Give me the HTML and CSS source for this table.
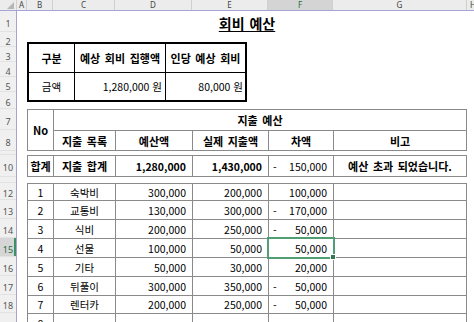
FILE: index.html
```html
<!DOCTYPE html>
<html lang="ko">
<head>
<meta charset="utf-8">
<link rel="stylesheet" href="styles.css">
</head>
<body>
<div class="sheet">
  <div class="colheads">
    <div class="corner"><span class="tri"></span></div>
    <div class="ch w-a">A</div>
    <div class="ch w-b">B</div>
    <div class="ch w-c">C</div>
    <div class="ch w-d">D</div>
    <div class="ch w-e">E</div>
    <div class="ch w-f sel">F</div>
    <div class="ch w-g">G</div>
    <div class="ch w-h">H</div>
  </div>
  <div class="body">
    <div class="rowheads">
      <div class="rh h21">1</div>
      <div class="rh h15">2</div>
      <div class="rh h15">3</div>
      <div class="rh h15">4</div>
      <div class="rh h15">5</div>
      <div class="rh h17">6</div>
      <div class="rh h21">7</div>
      <div class="rh h21">8</div>
      <div class="rh h4"></div>
      <div class="rh h22">10</div>
      <div class="rh h6"></div>
      <div class="rh h17">12</div>
      <div class="rh h19">13</div>
      <div class="rh h19">14</div>
      <div class="rh h19 sel">15</div>
      <div class="rh h19">16</div>
      <div class="rh h19">17</div>
      <div class="rh h18">18</div>
      <div class="rh h19"></div>
    </div>
    <div class="content">
      <div class="title"><span>회비 예산</span></div>
      <div class="summary-wrap">
        <div class="summary">
          <div class="sc c b">구분</div>
          <div class="sc c b">예상 회비 집행액</div>
          <div class="sc c b">인당 예상 회비</div>
          <div class="sc c">금액</div>
          <div class="sc r r3">1,280,000 원</div>
          <div class="sc r r1">80,000 원</div>
        </div>
      </div>
      <div class="tbl head">
        <div class="c b span-r2">No</div>
        <div class="c b span-c5">지출 예산</div>
        <div class="c b">지출 목록</div>
        <div class="c b">예산액</div>
        <div class="c b">실제 지출액</div>
        <div class="c b">차액</div>
        <div class="c b">비고</div>
      </div>
      <div class="tbl total">
        <div class="c b">합계</div>
        <div class="c b">지출 합계</div>
        <div class="r bn">1,280,000</div>
        <div class="r bn">1,430,000</div>
        <div class="acct"><span>-</span><span>150,000</span></div>
        <div class="c b">예산 초과 되었습니다.</div>
      </div>
      <div class="tbl data">
        <div class="c">1</div><div class="c">숙박비</div><div class="r">300,000</div><div class="r">200,000</div><div class="acct"><span></span><span>100,000</span></div><div></div>
        <div class="c">2</div><div class="c">교통비</div><div class="r">130,000</div><div class="r">300,000</div><div class="acct"><span>-</span><span>170,000</span></div><div></div>
        <div class="c">3</div><div class="c">식비</div><div class="r">200,000</div><div class="r">250,000</div><div class="acct"><span>-</span><span>50,000</span></div><div></div>
        <div class="c">4</div><div class="c">선물</div><div class="r">100,000</div><div class="r">50,000</div><div class="acct active"><span></span><span>50,000</span></div><div></div>
        <div class="c">5</div><div class="c">기타</div><div class="r">50,000</div><div class="r">30,000</div><div class="acct"><span></span><span>20,000</span></div><div></div>
        <div class="c">6</div><div class="c">뒤풀이</div><div class="r">300,000</div><div class="r">350,000</div><div class="acct"><span>-</span><span>50,000</span></div><div></div>
        <div class="c">7</div><div class="c">렌터카</div><div class="r">200,000</div><div class="r">250,000</div><div class="acct"><span>-</span><span>50,000</span></div><div></div>
        <div class="c low">8</div><div></div><div></div><div></div><div></div><div></div>
      </div>
    </div>
  </div>
</div>
</body>
</html>
```
FILE: styles.css
```css
* { box-sizing: border-box; }
html, body { margin: 0; padding: 0; background: #fff; }
body {
  width: 474px;
  height: 322px;
  overflow: hidden;
  font-family: "Noto Sans CJK KR", "Noto Sans", sans-serif;
  font-size: 10.5px;
  color: #000;
}
.sheet { width: 474px; height: 322px; overflow: hidden; }

/* column headers */
.colheads {
  display: flex;
  height: 11px;
  background: #ececec;
  border-bottom: 1px solid #a4a4d6;
}
.corner {
  width: 17px;
  flex: none;
  position: relative;
  border-right: 1px solid #d0d0d0;
}
.tri {
  position: absolute;
  right: 2px;
  bottom: 1px;
  width: 0;
  height: 0;
  border-left: 7px solid transparent;
  border-bottom: 7px solid #b6b6b6;
}
.ch {
  flex: none;
  font-family: "Noto Sans", sans-serif;
  font-size: 8px;
  line-height: 10px;
  color: #444;
  text-align: center;
  border-right: 1px solid #d0d0d0;
  overflow: hidden;
}
.w-a { width: 10px; }
.w-b { width: 26px; }
.w-c { width: 62px; }
.w-d { width: 77px; }
.w-e { width: 76px; }
.w-f { width: 65px; }
.w-g { width: 134px; }
.w-h { width: 40px; border-right: none; text-align: left; padding-left: 3px; }
.ch.sel { background: #d4d4d4; color: #1f6b45; }

/* body */
.body { display: flex; }
.rowheads {
  width: 17px;
  flex: none;
  background: #f0f0f0;
  border-right: 1px solid #a4a4d6;
  display: flex;
  flex-direction: column;
}
.rh {
  flex: none;
  font-family: "Noto Sans", sans-serif;
  font-size: 9px;
  color: #555;
  text-align: center;
  display: flex;
  align-items: center;
  justify-content: center;
  padding-top: 4px;
  overflow: hidden;
  border-bottom: 1px solid #e2e2e2;
}
.rh.sel { background: #d6d6d6; color: #1f6b45; box-shadow: inset -2px 0 0 #3f8f65; }
.h4 { height: 4px; padding-top: 0; }
.h6 { height: 6px; padding-top: 0; }
.h15 { height: 15px; }
.h17 { height: 17px; }
.h18 { height: 18px; }
.h19 { height: 19px; }
.h21 { height: 21px; }
.h22 { height: 22px; }

.content { display: flex; flex-direction: column; }

.title {
  height: 21px;
  width: 450px;
  display: flex;
  justify-content: center;
  align-items: flex-end;
  padding-left: 10px;
}
.title span {
  font-weight: 700;
  font-size: 14px;
  line-height: 18px;
  word-spacing: 1px;
  text-decoration: underline;
  text-underline-offset: 2px;
  text-decoration-thickness: 1px;
}

.summary-wrap {
  height: 77px;
  padding: 10px 0 0 10px;
}
.summary {
  display: grid;
  grid-template-columns: 45px 90px 79px;
  grid-template-rows: 28px 27px;
  gap: 1px;
  padding: 2px;
  background: #000;
  width: max-content;
}
.summary > div { background: #fff; display: flex; align-items: center; white-space: nowrap; }

.tbl {
  display: grid;
  grid-template-columns: 25px 61px 76px 75px 64px 132px;
  gap: 1px;
  padding: 1px;
  background: #8a8a8a;
  margin-left: 10px;
  width: max-content;
}
.tbl > div { background: #fff; display: flex; align-items: center; white-space: nowrap; overflow: hidden; }
.head { grid-template-rows: 20px 19px; }
.total { grid-template-rows: 20px; margin-top: 4px; }
.data { grid-template-rows: 16px 18px 18px 18px 18px 18px 17px 18px; margin-top: 6px; }

.span-r2 { grid-row: span 2; }
.span-c5 { grid-column: span 5; }

.c { justify-content: center; }
.r { justify-content: flex-end; padding-right: 6px; }
.r3 { padding-right: 3px; }
.r1 { padding-right: 2px; }
.b { font-weight: 700; font-size: 11px; word-spacing: 1.5px; }
.bn { font-weight: 700; }
.acct { justify-content: space-between; padding: 0 6px 0 4px; }
.tbl > .low { align-items: flex-start; padding-top: 2px; }

.acct.active {
  position: relative;
  outline: 2px solid #4f9e74;
  outline-offset: 0;
  overflow: visible;
}
.acct.active::after {
  content: "";
  position: absolute;
  right: -3px;
  bottom: -3px;
  width: 4px;
  height: 4px;
  background: #2f7a52;
  border: 1px solid #fff;
}
```
